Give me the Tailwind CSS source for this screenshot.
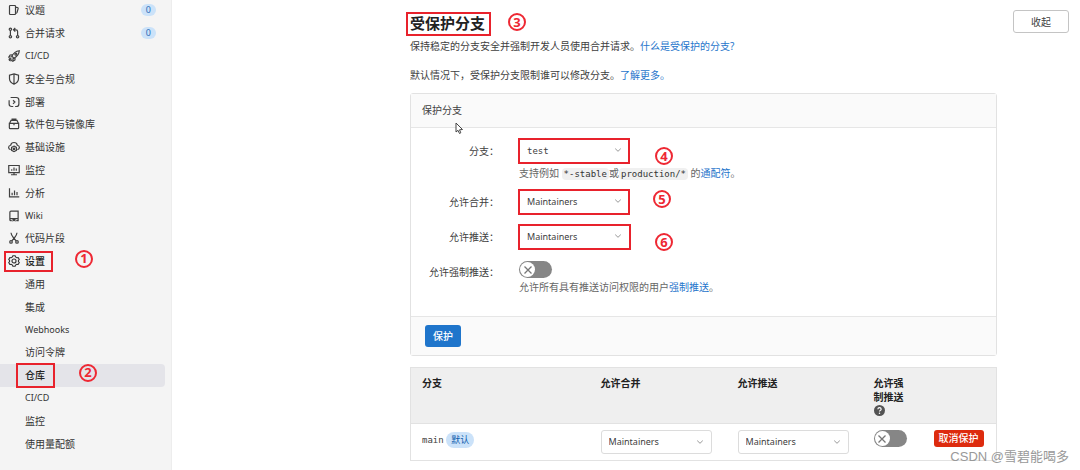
<!DOCTYPE html>
<html lang="zh-CN">
<head>
<meta charset="utf-8">
<meta name="viewport" content="width=device-width, initial-scale=1">
<title>仓库设置</title>
<script src="https://cdn.jsdelivr.net/npm/@tailwindcss/browser@4"></script>
</head>
<body class="relative min-h-screen overflow-hidden bg-white font-['Noto_Sans','Noto_Sans_CJK_SC',sans-serif] text-[10px] leading-[14px] text-[#404040]">

<!-- Icon and shape definitions -->
<svg class="hidden" aria-hidden="true">
  <symbol id="chev" viewBox="0 0 8 8"><path d="M1.2 2.6 4 5.3 6.8 2.6" fill="none" stroke="#999" stroke-width="1"/></symbol>
  <symbol id="cross" viewBox="0 0 10 10"><path d="M1.5 1.5l7 7M8.5 1.5l-7 7" fill="none" stroke="#777" stroke-width="1.3"/></symbol>
</svg>

<div class="flex">
  <aside class="-mt-px flex h-[calc(100vh+1px)] w-[172px] shrink-0 flex-col border-r border-[#ededed] bg-[#f4f4f4]">
    <nav class="flex flex-1 flex-col pb-[15px] text-[#333]" aria-label="项目">
      <ul class="flex flex-12 flex-col">
        <li class="flex flex-1"><a href="#" class="flex flex-1 items-center gap-[5px] pl-2 pr-[15px]">
          <svg class="size-3" viewBox="0 0 16 16" fill="none" stroke="#404040" stroke-width="1.6"><path d="M2 3q0-1 1-1h6q1 0 1 1v10q0 1-1 1H3q-1 0-1-1zM10 4.2l2.6.5q1 .3 1 1.200L12 11.500q-.3.900-2 1"/></svg>
          <span class="flex-1">议题</span><span class="rounded-full bg-[#cbe2f9] px-[5px] text-[9px] leading-3 text-[#2f6fb8]">0</span></a></li>
        <li class="flex flex-1"><a href="#" class="flex flex-1 items-center gap-[5px] pl-2 pr-[15px]">
          <svg class="size-3" viewBox="0 0 16 16" fill="none" stroke="#404040" stroke-width="1.600"><circle cx="3.200" cy="3" r="1.600"/><circle cx="3.200" cy="13" r="1.600"/><circle cx="12.800" cy="13" r="1.600"/><path d="M3.200 4.600v6.800M12.800 11.400V6q0-2.200-2.200-2.200H7.500M9.700 1.300 7.300 3.800l2.400 2.400"/></svg>
          <span class="flex-1">合并请求</span><span class="rounded-full bg-[#cbe2f9] px-[5px] text-[9px] leading-3 text-[#2f6fb8]">0</span></a></li>
        <li class="flex flex-1"><a href="#" class="flex flex-1 items-center gap-[5px] pl-2">
          <svg class="size-3" viewBox="0 0 16 16" fill="none" stroke="#404040" stroke-width="1.600"><path d="M5.200 8.200Q8.500 1.500 15 1q-.3 6.500-7.200 9.900zM6 6.500 2.800 6.700 1 9.500l4.200-.5M9.400 9.800 9.300 13.200 6.500 15l.4-4.200M4.300 11 1.500 14.500M3 10.700 1 13M5.400 12.800 3.400 15"/><circle cx="10.500" cy="5.500" r="1.300"/></svg>
          <span class="text-[9px]">CI/CD</span></a></li>
        <li class="flex flex-1"><a href="#" class="flex flex-1 items-center gap-[5px] pl-2">
          <svg class="size-3" viewBox="0 0 16 16" fill="none" stroke="#404040" stroke-width="1.600"><path d="M8 1.200 14 3v4.500q0 4.500-6 7.300-6-2.800-6-7.300V3zM8 1.500v13"/></svg>
          <span>安全与合规</span></a></li>
        <li class="flex flex-1"><a href="#" class="flex flex-1 items-center gap-[5px] pl-2">
          <svg class="size-3" viewBox="0 0 16 16" fill="none" stroke="#404040" stroke-width="1.600"><path d="M3.500 2H11q3.500 0 3.500 3.500v5q0 3.500-3.500 3.500H9.500M7 14H5Q1.500 14 1.500 10.500v-5M6.700 5.600 9.200 8l-2.500 2.400"/></svg>
          <span>部署</span></a></li>
        <li class="flex flex-1"><a href="#" class="flex flex-1 items-center gap-[5px] pl-2">
          <svg class="size-3" viewBox="0 0 16 16" fill="none" stroke="#404040" stroke-width="1.600"><path d="M1.800 7.200h12.400v5.800q0 1.200-1.200 1.200H3q-1.200 0-1.200-1.200zM2 7.200 4 3.200h8l2 4M5.500 3V1.500h5V3M8 7.200v2.600"/></svg>
          <span>软件包与镜像库</span></a></li>
        <li class="flex flex-1"><a href="#" class="flex flex-1 items-center gap-[5px] pl-2">
          <svg class="size-3" viewBox="0 0 16 16" fill="none" stroke="#404040" stroke-width="1.600"><path d="M3.500 11.500Q.8 11 .8 8.600q0-2.500 2.700-2.900Q4.300 2 8 2t4.500 3.700q2.700.4 2.700 2.900 0 2.400-2.700 2.900"/><path d="M8 6.800l3.200 1.800v3.800L8 14.200l-3.200-1.800V8.600z"/><circle cx="8" cy="10.500" r="1"/></svg>
          <span>基础设施</span></a></li>
        <li class="flex flex-1"><a href="#" class="flex flex-1 items-center gap-[5px] pl-2">
          <svg class="size-3" viewBox="0 0 16 16" fill="none" stroke="#404040" stroke-width="1.600"><path d="M1 2h14v9.500H1zM8 11.500V14M4 14.300h8M5 9V7M8 9V4.500M11 9V6"/></svg>
          <span>监控</span></a></li>
        <li class="flex flex-1"><a href="#" class="flex flex-1 items-center gap-[5px] pl-2">
          <svg class="size-3" viewBox="0 0 16 16" fill="none" stroke="#404040" stroke-width="1.600"><path d="M2 1.500V13.200H15M5.500 11V7.500M8.700 11V4.500M12 11V6.500"/></svg>
          <span>分析</span></a></li>
        <li class="flex flex-1"><a href="#" class="flex flex-1 items-center gap-[5px] pl-2">
          <svg class="size-3" viewBox="0 0 16 16" fill="none" stroke="#404040" stroke-width="1.600"><path d="M13.500 11.500V1.500H4q-1.500 0-1.500 1.500v10q0 1.200 1.300 1.200H5M2.500 12.500q0-1 1.500-1h9.500v2.700H11"/><path d="M6 11.500h4v4l-2-1.300-2 1.300z" fill="#404040" stroke="none"/></svg>
          <span class="text-[9px]">Wiki</span></a></li>
        <li class="flex flex-1"><a href="#" class="flex flex-1 items-center gap-[5px] pl-2">
          <svg class="size-3" viewBox="0 0 16 16" fill="none" stroke="#404040" stroke-width="1.600"><path d="M4 1q.2 3 3.500 7l3.400 3.800M12 1q-.2 3-3.500 7l-3.400 3.800"/><circle cx="4" cy="13.200" r="1.700"/><circle cx="12" cy="13.200" r="1.700"/></svg>
          <span>代码片段</span></a></li>
        <li class="relative flex flex-1"><a href="#" class="flex flex-1 items-center gap-[5px] pl-2 font-medium text-[#222]">
          <svg class="size-3" viewBox="0 0 16 16" fill="none" stroke="#333" stroke-width="1.500"><path d="M6.500 1h3l.6 1.600 1.700 1 1.700-.2L15 6 13.900 7.300v1.400L15 10l-1.500 2.600-1.700-.2-1.700 1L9.500 15h-3l-.6-1.600-1.700-1-1.700.2L1 10l1.100-1.300V7.300L1 6l1.500-2.600 1.700.2 1.700-1z"/><circle cx="8" cy="8" r="2.700"/></svg>
          <span>设置</span></a>
          <span class="absolute left-1 top-px h-[21px] w-[49px] border-2 border-[#e8222c]"></span>
          <span class="absolute left-[75px] top-0 flex size-[18px] items-center justify-center rounded-full border-2 border-[#ee2833] text-[13px] font-bold leading-none text-[#ee2833]">1</span></li>
      </ul>
      <ul class="flex flex-8 flex-col">
        <li class="flex flex-1"><a href="#" class="flex flex-1 items-center pl-[25px]">通用</a></li>
        <li class="flex flex-1"><a href="#" class="flex flex-1 items-center pl-[25px]">集成</a></li>
        <li class="flex flex-1"><a href="#" class="flex flex-1 items-center pl-[25px] text-[9px]">Webhooks</a></li>
        <li class="flex flex-1"><a href="#" class="flex flex-1 items-center pl-[25px]">访问令牌</a></li>
        <li class="relative mr-1.5 flex flex-1"><a href="#" aria-current="page" class="flex flex-1 items-center rounded-r bg-[#e4e4e9] pl-[25px] font-medium text-[#222]">仓库</a>
          <span class="absolute -top-px left-4 h-[25px] w-[39px] border-2 border-[#e8222c]"></span>
          <span class="absolute left-[79px] top-0 flex size-[18px] items-center justify-center rounded-full border-2 border-[#ee2833] text-[13px] font-bold leading-none text-[#ee2833]">2</span></li>
        <li class="flex flex-1"><a href="#" class="flex flex-1 items-center pl-[25px] text-[9px]">CI/CD</a></li>
        <li class="flex flex-1"><a href="#" class="flex flex-1 items-center pl-[25px]">监控</a></li>
        <li class="flex flex-1"><a href="#" class="flex flex-1 items-center pl-[25px]">使用量配额</a></li>
      </ul>
    </nav>
  </aside>

  <main class="flex min-w-0 flex-1 items-start gap-4 pl-[238px] pr-[11px] pt-[10px]">
    <div class="min-w-0 flex-1">
      <div class="relative">
        <h1 class="text-[15px] font-bold leading-[26px] text-[#222]">受保护分支</h1>
        <span class="absolute -left-1 top-[2px] h-6 w-[85px] border-2 border-[#e8222c]"></span>
        <span class="absolute left-[98px] top-[3px] flex size-[18px] items-center justify-center rounded-full border-2 border-[#ee2833] text-[13px] font-bold leading-none text-[#ee2833]">3</span>
      </div>
      <p class="mt-[3px] whitespace-nowrap">保持稳定的分支安全并强制开发人员使用合并请求。<a href="#" class="text-[#1f75cb]">什么是受保护的分支?</a></p>
      <p class="mt-[15px] whitespace-nowrap">默认情况下，受保护分支限制谁可以修改分支。<a href="#" class="text-[#1f75cb]">了解更多。</a></p>

      <form class="relative mt-[11px] rounded-[3px] border border-[#e2e2e2]" onsubmit="return false">
        <h2 class="border-b border-[#e6e6e6] bg-[#fafafa] px-[11px] py-[9px] leading-[15px]">保护分支</h2>
        <svg class="absolute left-[44px] top-[28px] h-3 w-2" viewBox="0 0 8 12"><path d="M1 1v9l2-1.700L4.500 11.500l1.300-.7-1.300-3L7.500 7.500z" fill="#fff" stroke="#444" stroke-width="1"/></svg>

        <div class="grid grid-cols-[88px_1fr] gap-x-[19px] pb-[22px] pt-[10px]">
          <label for="branch" class="pt-1.5 text-right">分支：</label>
          <div>
            <div class="relative w-[112px]">
              <select id="branch" class="block h-[26px] w-full appearance-none border-2 border-[#e8222c] bg-white pl-[7px] font-['DejaVu_Sans_Mono',monospace] text-[9px]"><option>test</option></select>
              <svg class="pointer-events-none absolute right-2 top-2 size-2"><use href="#chev"/></svg>
              <span class="absolute left-[137px] top-[9px] flex size-[18px] items-center justify-center rounded-full border-2 border-[#ee2833] text-[13px] font-bold leading-none text-[#ee2833]">4</span>
            </div>
            <p class="mt-[2px] whitespace-nowrap pl-px text-[#666]">支持例如 <code class="rounded-sm bg-[#f0f0f0] px-0.5 py-px font-['DejaVu_Sans_Mono',monospace] text-[9px] text-[#333]">*-stable</code>或<code class="rounded-sm bg-[#f0f0f0] px-0.5 py-px font-['DejaVu_Sans_Mono',monospace] text-[9px] text-[#333]">production/*</code> 的<a href="#" class="text-[#1f75cb]">通配符</a>。</p>
          </div>
          <label for="merge" class="mt-2 pt-1.5 text-right">允许合并：</label>
          <div class="relative mt-2 w-[112px]">
            <select id="merge" class="block h-[26px] w-full appearance-none border-2 border-[#e8222c] bg-white pl-[7px] text-[9px]"><option>Maintainers</option></select>
            <svg class="pointer-events-none absolute right-2 top-2 size-2"><use href="#chev"/></svg>
            <span class="absolute left-[135px] top-px flex size-[18px] items-center justify-center rounded-full border-2 border-[#ee2833] text-[13px] font-bold leading-none text-[#ee2833]">5</span>
          </div>
          <label for="push" class="mt-[9px] pt-1.5 text-right">允许推送：</label>
          <div class="relative mt-[9px] w-[113px]">
            <select id="push" class="block h-[26px] w-full appearance-none border-2 border-[#e8222c] bg-white pl-[7px] text-[9px]"><option>Maintainers</option></select>
            <svg class="pointer-events-none absolute right-[9px] top-2 size-2"><use href="#chev"/></svg>
            <span class="absolute left-[137px] top-[9px] flex size-[18px] items-center justify-center rounded-full border-2 border-[#ee2833] text-[13px] font-bold leading-none text-[#ee2833]">6</span>
          </div>
          <label for="force" class="mt-[11px] pt-1 text-right">允许强制推送：</label>
          <div class="mt-[11px]">
            <div class="relative ml-px h-[17px] w-[33px]">
              <input id="force" type="checkbox" role="switch" class="block h-full w-full appearance-none rounded-full bg-[#868686]">
              <span class="pointer-events-none absolute left-px top-px flex size-[15px] items-center justify-center rounded-full bg-white"><svg class="size-[10px]"><use href="#cross"/></svg></span>
            </div>
            <p class="mt-[2px] whitespace-nowrap pl-px text-[#666]">允许所有具有推送访问权限的用户<a href="#" class="text-[#1f75cb]">强制推送</a>。</p>
          </div>
        </div>

        <div class="border-t border-[#e6e6e6] bg-[#fafafa] px-[14px] py-2">
          <button class="block rounded-[3px] bg-[#1f75cb] px-2 py-1 font-medium text-white">保护</button>
        </div>
      </form>

      <table class="mt-[11px] w-full table-fixed border-collapse border border-[#e2e2e2] text-left">
        <colgroup><col><col class="w-[137px]"><col class="w-[136px]"><col class="w-[60px]"><col class="w-[75px]"></colgroup>
        <thead class="bg-[#efefef] align-top text-[#222]">
          <tr class="border-b border-[#e2e2e2]">
            <th class="px-[11px] pb-[7px] pt-2 font-bold">分支</th>
            <th class="px-3 pb-[7px] pt-2 font-bold">允许合并</th>
            <th class="px-3 pb-[7px] pt-2 font-bold">允许推送</th>
            <th class="whitespace-nowrap px-3 pb-[7px] pt-2 font-bold">允许强<br>制推送
              <svg class="mt-px block size-[11px]" viewBox="0 0 16 16" role="img" aria-label="帮助"><circle cx="8" cy="8" r="8" fill="#535353"/><path d="M5.600 6.200Q5.700 3.900 8 3.900t2.400 2.100Q10.400 7.300 9 8q-1 .5-1 1.500" fill="none" stroke="#fff" stroke-width="1.700"/><circle cx="8" cy="11.900" r="1.100" fill="#fff"/></svg></th>
            <th class="px-3" aria-label="操作"></th>
          </tr>
        </thead>
        <tbody class="align-top">
          <tr>
            <td class="px-[11px] pt-2"><span class="font-['DejaVu_Sans_Mono',monospace] text-[9px]">main</span> <span class="inline-block rounded-full bg-[#cbe2f9] px-[5px] py-px text-[9px] text-[#0b5cad]">默认</span></td>
            <td class="pb-1.5 pl-3 pt-1.5"><div class="relative w-[111px]">
              <select aria-label="允许合并" class="block h-6 w-full appearance-none rounded-[3px] border border-[#dcdcdc] bg-white pl-[7px] text-[9px]"><option>Maintainers</option></select>
              <svg class="pointer-events-none absolute right-2 top-2 size-2"><use href="#chev"/></svg></div></td>
            <td class="pb-1.5 pl-3 pt-1.5"><div class="relative w-[111px]">
              <select aria-label="允许推送" class="block h-6 w-full appearance-none rounded-[3px] border border-[#dcdcdc] bg-white pl-[7px] text-[9px]"><option>Maintainers</option></select>
              <svg class="pointer-events-none absolute right-2 top-2 size-2"><use href="#chev"/></svg></div></td>
            <td class="pl-3 pt-1.5"><div class="relative h-[17px] w-[33px]">
              <input aria-label="允许强制推送" type="checkbox" role="switch" class="block h-full w-full appearance-none rounded-full bg-[#868686]">
              <span class="pointer-events-none absolute left-px top-px flex size-[15px] items-center justify-center rounded-full bg-white"><svg class="size-[10px]"><use href="#cross"/></svg></span></div></td>
            <td class="pl-3 pt-1.5"><button class="block whitespace-nowrap rounded-[3px] bg-[#dd2b0e] px-[5px] py-px font-medium leading-[15px] text-white">取消保护</button></td>
          </tr>
        </tbody>
      </table>
    </div>
    <button class="h-[23px] w-14 shrink-0 rounded-[3px] border border-[#c4c4c4] bg-white">收起</button>
  </main>
</div>

<span class="absolute bottom-1 right-[11px] font-['Liberation_Sans','Noto_Sans_CJK_SC',sans-serif] text-[13px] leading-[18px] text-[#999]">CSDN @雪碧能喝多</span>
</body>
</html>
